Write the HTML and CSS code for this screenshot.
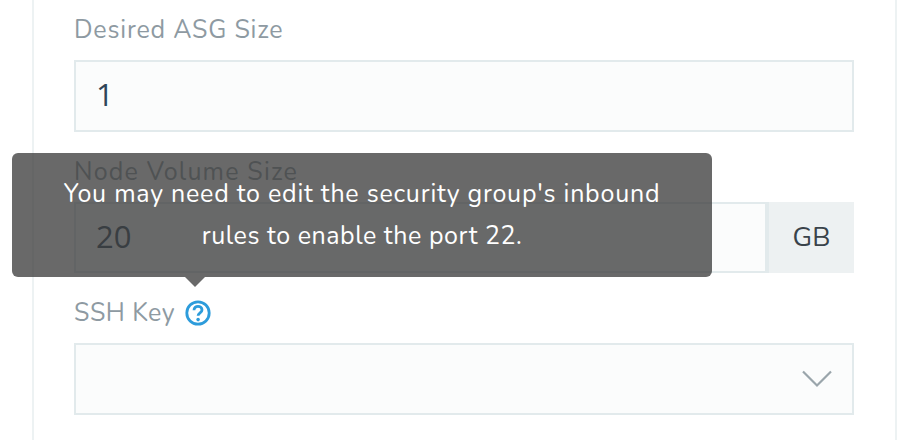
FILE: index.html
```html
<!DOCTYPE html>
<html lang="en">
<head>
<meta charset="utf-8">
<title>Node settings</title>
<link rel="stylesheet" href="styles.css">
</head>
<body>
<main class="card">
  <div class="field">
    <label class="label">Desired ASG Size</label>
    <div class="input"><span class="value">1</span></div>
  </div>
  <div class="field">
    <label class="label label-wide">Node Volume Size</label>
    <div class="input-group">
      <div class="input grow"><span class="value">20</span></div>
      <div class="addon">GB</div>
    </div>
  </div>
  <div class="field">
    <label class="label label-tight">SSH Key
      <span class="help">
        <svg class="help-icon" viewBox="0 0 26 26" aria-hidden="true">
          <circle cx="13" cy="13" r="11.2" fill="none" stroke="#2d9cdb" stroke-width="2.8"/>
          <path d="M9 10.2c0-2.4 1.8-3.8 4-3.8s4 1.400 4 3.500c0 2.900-3.900 2.900-3.900 5.800" fill="none" stroke="#2d9cdb" stroke-width="2.800"/>
          <circle cx="13.100" cy="19.600" r="1.800" fill="#2d9cdb"/>
        </svg>
      </span>
    </label>
    <div class="input select">
      <svg class="chevron" viewBox="0 0 30 18" aria-hidden="true"><path d="M1 1.500 15 15.500 29 1.500" fill="none" stroke="#9aa5ab" stroke-width="2.200"/></svg>
    </div>
  </div>
</main>
<div class="tooltip" role="tooltip">
  <p class="tip-line tip-first">You may need to edit the security group's inbound</p>
  <p class="tip-line">rules to enable the port 22.</p>
</div>
</body>
</html>
```
FILE: styles.css
```css
* { box-sizing: border-box; }
html, body { margin: 0; height: 440px; overflow: hidden; background: #fff; }
body { font-family: "Nunito", "Lato", "Noto Sans", sans-serif; position: relative; }
.card {
  margin-left: 32px;
  width: 865px;
  height: 440px;
  border-left: 2px solid #edf2f3;
  border-right: 2px solid #edf2f3;
  padding: 12.3px 41px 0 40px;
  display: flex;
  flex-direction: column;
  gap: 22.1px;
}
.field { display: flex; flex-direction: column; gap: 12px; }
.label {
  display: flex;
  align-items: center;
  gap: 10px;
  height: 36px;
  font-size: 25px;
  letter-spacing: 0.8px;
  color: #8e9aa2;
}
.label-wide { letter-spacing: 1.2px; }
.label-tight { letter-spacing: 0.5px; }
.input {
  height: 71.4px;
  border: 2px solid #e2eaec;
  background: #fbfcfc;
  display: flex;
  align-items: center;
  padding: 0 20px 3px;
}
.value { font-family: "Open Sans", sans-serif; font-size: 31px; color: #2f4558; }
.input-group { display: flex; }
.grow { flex: 1; }
.addon {
  width: 87px;
  height: 71.4px;
  background: #edf1f2;
  border-left: 2px solid #e2eaec;
  display: flex;
  align-items: center;
  justify-content: center;
  font-size: 27px;
  color: #39434a;
}
.help { display: inline-flex; }
.help-icon { width: 26px; height: 26px; display: block; }
.select { position: relative; justify-content: flex-end; padding: 0 20px; }
.chevron { width: 30px; height: 18px; display: block; }
.tooltip {
  position: absolute;
  left: 12px;
  top: 153px;
  width: 700px;
  height: 124px;
  padding-top: 20px;
  border-radius: 6px;
  background: rgba(60, 60, 60, 0.77);
  color: #fff;
  text-align: center;
  font-size: 25px;
  letter-spacing: 0.55px;
}
.tooltip::after {
  content: "";
  position: absolute;
  left: 173px;
  top: 100%;
  border-left: 10px solid transparent;
  border-right: 10px solid transparent;
  border-top: 10px solid rgba(60, 60, 60, 0.77);
}
.tip-line { margin: 0; height: 42px; line-height: 42px; }
.tip-first { letter-spacing: 0.77px; }
```
